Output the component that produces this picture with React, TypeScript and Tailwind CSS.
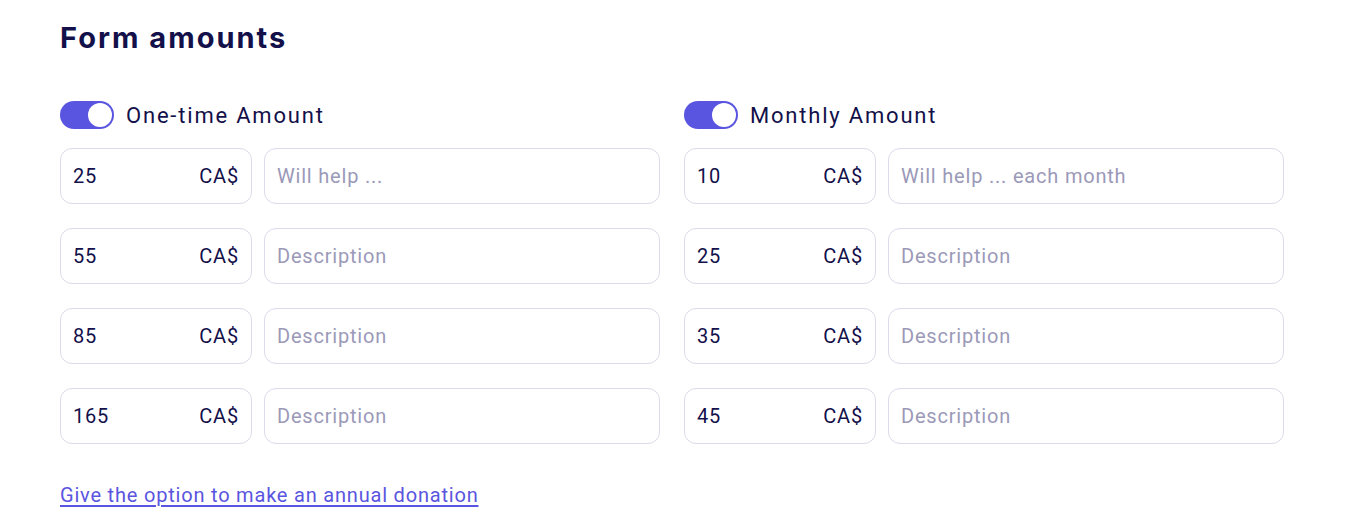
import { useState } from 'react';

const oneTime = [
    { amount: '25', placeholder: 'Will help ...' },
    { amount: '55', placeholder: 'Description' },
    { amount: '85', placeholder: 'Description' },
    { amount: '165', placeholder: 'Description' },
];

const monthly = [
    { amount: '10', placeholder: 'Will help ... each month' },
    { amount: '25', placeholder: 'Description' },
    { amount: '35', placeholder: 'Description' },
    { amount: '45', placeholder: 'Description' },
];

const Toggle = ({ on, onClick }: { on: boolean; onClick: () => void }) => (
    <button
        onClick={onClick}
        className={`flex items-center w-[54px] h-[28px] rounded-full p-[2px] ${on ? 'bg-[#5a55e0] justify-end' : 'bg-[#d6d4e6] justify-start'}`}
    >
        <span className="block w-[24px] h-[24px] rounded-full bg-white" />
    </button>
);

const AmountColumn = ({ title, rows }: { title: string; rows: { amount: string; placeholder: string }[] }) => {
    const [on, setOn] = useState(true);
    return (
        <div className="flex flex-col w-[600px]">
            <div className="flex items-center gap-3 h-[28px]">
                <Toggle on={on} onClick={() => setOn(!on)} />
                <span className="text-[22px] tracking-[1.8px] text-[#13104a]">{title}</span>
            </div>
            <div className="flex flex-col gap-6 mt-[19px]">
                {rows.map((row, i) => (
                    <div key={i} className="flex gap-3">
                        <div className="flex items-center justify-between w-[192px] h-[56px] px-3 border border-[#dcdaea] rounded-xl bg-white">
                            <input
                                defaultValue={row.amount}
                                className="w-[100px] text-[20px] tracking-[0.8px] text-[#13104a] outline-none bg-transparent"
                            />
                            <span className="text-[20px] tracking-[0.8px] text-[#13104a]">CA$</span>
                        </div>
                        <input
                            placeholder={row.placeholder}
                            className="flex-1 h-[56px] px-3 border border-[#dcdaea] rounded-xl text-[20px] tracking-[0.8px] text-[#13104a] placeholder:text-[#9b99b8] outline-none bg-white"
                        />
                    </div>
                ))}
            </div>
        </div>
    );
};

export default function App() {
    return (
        <div className="min-h-screen bg-white px-[60px] pt-[18px] font-['Roboto',sans-serif]">
            <h1 className="text-[29px] font-bold text-[#13104a] font-['Inter',sans-serif] tracking-[2px] leading-[40px]">
                Form amounts
            </h1>
            <div className="flex gap-6 mt-[43px]">
                <AmountColumn title="One-time Amount" rows={oneTime} />
                <AmountColumn title="Monthly Amount" rows={monthly} />
            </div>
            <a href="#" className="inline-block mt-[36px] text-[20px] tracking-[0.8px] text-[#5a55e0] underline underline-offset-[3px]">
                Give the option to make an annual donation
            </a>
        </div>
    );
}
